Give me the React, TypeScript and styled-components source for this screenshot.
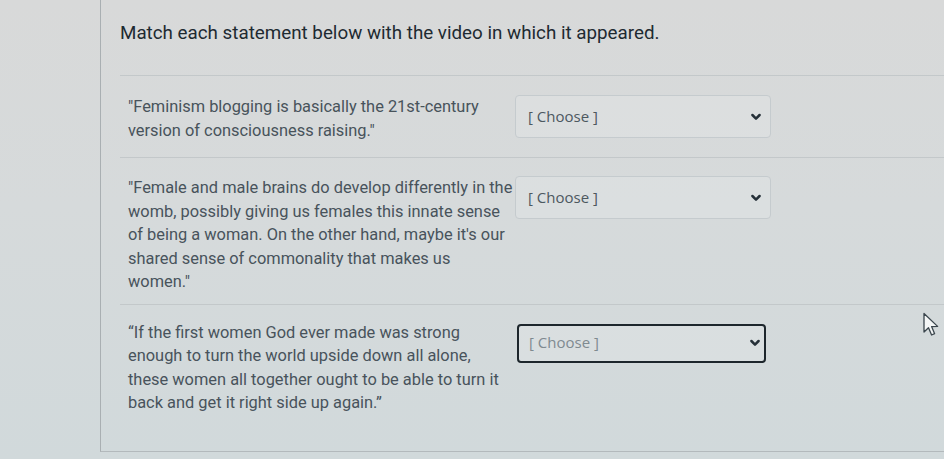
import React from 'react';
import styled, { createGlobalStyle } from 'styled-components';

const GlobalStyle = createGlobalStyle`
  html, body {
    margin: 0;
    padding: 0;
  }
  body {
    background: linear-gradient(180deg, #d8d9d9 0%, #d6dadb 45%, #d1d9db 100%);
    font-family: Roboto, "Liberation Sans", Arial, sans-serif;
    -webkit-font-smoothing: antialiased;
  }
`;

const Page = styled.div`
  position: relative;
  width: 944px;
  height: 459px;
  overflow: hidden;
  padding-left: 100px;
  box-sizing: border-box;
`;

const Card = styled.div`
  display: flex;
  flex-direction: column;
  height: 452px;
  box-sizing: border-box;
  border-left: 1px solid #a9afb2;
  border-bottom: 1px solid #b3b9bc;
  padding-left: 19px;
`;

const Title = styled.h2`
  margin: 0;
  height: 75px;
  padding-top: 21px;
  box-sizing: border-box;
  font-size: 18.8px;
  line-height: 24px;
  font-weight: 400;
  color: #1e2a31;
`;

const List = styled.div`
  flex: 1;
  display: flex;
  flex-direction: column;
`;

const Row = styled.div<{ $last?: boolean; $top: number; $bottom: number }>`
  display: flex;
  align-items: flex-start;
  border-top: 1px solid #c3c8ca;
  padding: ${p => p.$top}px 0 ${p => p.$bottom}px 8px;
  flex: ${p => (p.$last ? 1 : 'none')};
`;

const Statement = styled.p`
  margin: 0;
  width: 384px;
  font-size: 16.4px;
  line-height: 23.5px;
  color: #48535b;
  white-space: nowrap;
`;

const Line = styled.span`
  display: block;
`;

const SelectBox = styled.div<{ $focused?: boolean }>`
  display: flex;
  align-items: center;
  justify-content: space-between;
  box-sizing: border-box;
  width: ${p => (p.$focused ? 249 : 256)}px;
  height: ${p => (p.$focused ? 39 : 43)}px;
  margin-left: ${p => (p.$focused ? 5 : 3)}px;
  margin-top: ${p => (p.$focused ? 3 : 0)}px;
  padding: 0 ${p => (p.$focused ? 3 : 8)}px 0 ${p => (p.$focused ? 10 : 12)}px;
  border: ${p => (p.$focused ? '2px solid #1d262c' : '1px solid #c5cbce')};
  border-radius: 4px;
  background: rgba(255, 255, 255, 0.14);
`;

const SelectText = styled.span<{ $muted?: boolean }>`
  font-family: "Open Sans", "Liberation Sans", Arial, sans-serif;
  font-size: 15px;
  color: ${p => (p.$muted ? '#7f8a90' : '#4d585f')};
  margin-top: -2px;
`;

const Cursor = styled.svg`
  position: absolute;
  left: 922px;
  top: 312px;
`;

const Chevron = () => (
  <svg width="12" height="8" viewBox="0 0 12 8">
    <path d="M2.4 2 L6 5.6 L9.6 2" fill="none" stroke="#253038" strokeWidth="2.5" strokeLinecap="round" strokeLinejoin="round" />
  </svg>
);

const items = [
  {
    lines: ['"Feminism blogging is basically the 21st-century', 'version of consciousness raising."'],
    top: 19,
    bottom: 15,
  },
  {
    lines: [
      '"Female and male brains do develop differently in the',
      'womb, possibly giving us females this innate sense',
      "of being a woman. On the other hand, maybe it's our",
      'shared sense of commonality that makes us',
      'women."',
    ],
    top: 18,
    bottom: 10,
  },
  {
    lines: [
      '\u201cIf the first women God ever made was strong',
      'enough to turn the world upside down all alone,',
      'these women all together ought to be able to turn it',
      'back and get it right side up again.\u201d',
    ],
    top: 16,
    bottom: 14,
    focused: true,
  },
];

export default function App() {
  return (
    <>
      <GlobalStyle />
      <Page>
        <Card>
          <Title>Match each statement below with the video in which it appeared.</Title>
          <List>
            {items.map((item, i) => (
              <Row key={i} $top={item.top} $bottom={item.bottom} $last={i === items.length - 1}>
                <Statement>
                  {item.lines.map((l, j) => (
                    <Line key={j}>{l}</Line>
                  ))}
                </Statement>
                <SelectBox $focused={item.focused}>
                  <SelectText $muted={item.focused}>[ Choose ]</SelectText>
                  <Chevron />
                </SelectBox>
              </Row>
            ))}
          </List>
        </Card>
        <Cursor width="20" height="26" viewBox="0 0 20 26">
          <path d="M2 1.5 L2 20 L6.5 15.8 L9.6 23 L12.6 21.7 L9.6 14.6 L15.6 14.4 Z" fill="#f4f6f6" stroke="#3b464d" strokeWidth="1.3" strokeLinejoin="round" />
        </Cursor>
      </Page>
    </>
  );
}
